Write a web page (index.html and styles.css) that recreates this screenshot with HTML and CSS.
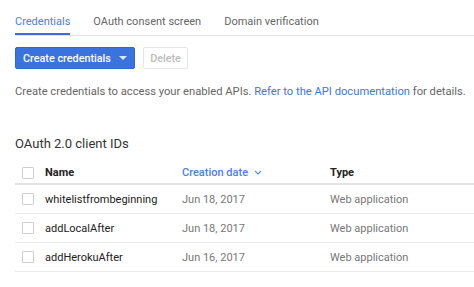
FILE: index.html
```html
<!DOCTYPE html>
<html lang="en">
<head>
  <meta charset="UTF-8">
  <title>Credentials</title>
  <link rel="stylesheet" href="styles.css">
</head>
<body>

<div class="tabs">
  <div class="tab active">Credentials</div>
  <div class="tab">OAuth consent screen</div>
  <div class="tab">Domain verification</div>
</div>

<div class="toolbar">
  <button class="btn-primary">
    Create credentials
    <span class="caret"></span>
  </button>
  <button class="btn-disabled">Delete</button>
</div>

<p class="intro">
  Create credentials to access your enabled APIs.
  <a href="#">Refer to the API documentation</a> for details.
</p>

<h3>OAuth 2.0 client IDs</h3>

<div class="table">
  <div class="row head">
    <div class="cell"><span class="check"></span></div>
    <div class="cell">Name</div>
    <div class="cell sorted">
      Creation date
      <svg width="8" height="5" viewBox="0 0 8 5"><path d="M1 1 L4 4 L7 1" fill="none" stroke="#5b8ee6" stroke-width="1.2"/></svg>
    </div>
    <div class="cell">Type</div>
  </div>
  <div class="row">
    <div class="cell"><span class="check"></span></div>
    <div class="cell name">whitelistfrombeginning</div>
    <div class="cell muted">Jun 18, 2017</div>
    <div class="cell muted">Web application</div>
  </div>
  <div class="row">
    <div class="cell"><span class="check"></span></div>
    <div class="cell name">addLocalAfter</div>
    <div class="cell muted">Jun 18, 2017</div>
    <div class="cell muted">Web application</div>
  </div>
  <div class="row">
    <div class="cell"><span class="check"></span></div>
    <div class="cell name">addHerokuAfter</div>
    <div class="cell muted">Jun 16, 2017</div>
    <div class="cell muted">Web application</div>
  </div>
</div>

</body>
</html>
```

FILE: styles.css
```css
* {
  box-sizing: border-box;
  font-family: Roboto, 'Liberation Sans', sans-serif;
}

body {
  margin: 0;
  padding-left: 15px;
  background: #fff;
  color: #333;
  overflow: hidden;
}

.tabs {
  display: flex;
  gap: 23px;
  border-bottom: 1px solid #e3e3e3;
}

.tab {
  font-size: 11px;
  line-height: 14px;
  padding: 15px 0 4px;
  color: #666;
  border-bottom: 2px solid transparent;
}

.tab.active {
  color: #4a80e8;
  border-bottom-color: #3b6fd6;
}

.toolbar {
  display: flex;
  gap: 8px;
  margin-top: 11px;
}

button {
  height: 22px;
  border-radius: 2px;
  font-size: 10.8px;
  font-weight: 500;
  padding: 0 7px;
  display: flex;
  align-items: center;
  white-space: nowrap;
}

.btn-primary {
  width: 120px;
  background: #3a73de;
  border: 1px solid #2f66cf;
  color: #fff;
}

.caret {
  margin-left: auto;
  width: 0;
  height: 0;
  border-left: 4px solid transparent;
  border-right: 4px solid transparent;
  border-top: 4px solid #dfe8fb;
}

.btn-disabled {
  width: 45px;
  justify-content: center;
  background: #fff;
  border: 1px solid #e6e6e6;
  color: #bdbdbd;
}

.intro {
  margin: 16px 0 0;
  font-size: 11.2px;
  line-height: 14px;
  color: #666;
  white-space: nowrap;
}

.intro a {
  color: #3f76dc;
  text-decoration: none;
}

h3 {
  margin: 37px 0 0;
  font-size: 13px;
  font-weight: 400;
  line-height: 16px;
  color: #333;
}

.row {
  display: grid;
  grid-template-columns: 30px 137px 148px 1fr;
  align-items: center;
  height: 29px;
  border-bottom: 1px solid #ececec;
  font-size: 11px;
}

.row.head {
  height: 27px;
  margin-top: 6px;
  padding-top: 4px;
  border-bottom: 2px solid #e3e3e3;
  font-weight: 700;
  color: #222;
}

.cell:first-child {
  padding-left: 7px;
  display: flex;
}

.check {
  width: 12px;
  height: 12px;
  border: 1px solid #cfcfcf;
  border-radius: 1px;
}

.sorted {
  color: #4a80e8;
  font-weight: 500;
  display: flex;
  align-items: center;
  gap: 6px;
}

.name {
  color: #222;
}

.muted {
  color: #777;
}
```
